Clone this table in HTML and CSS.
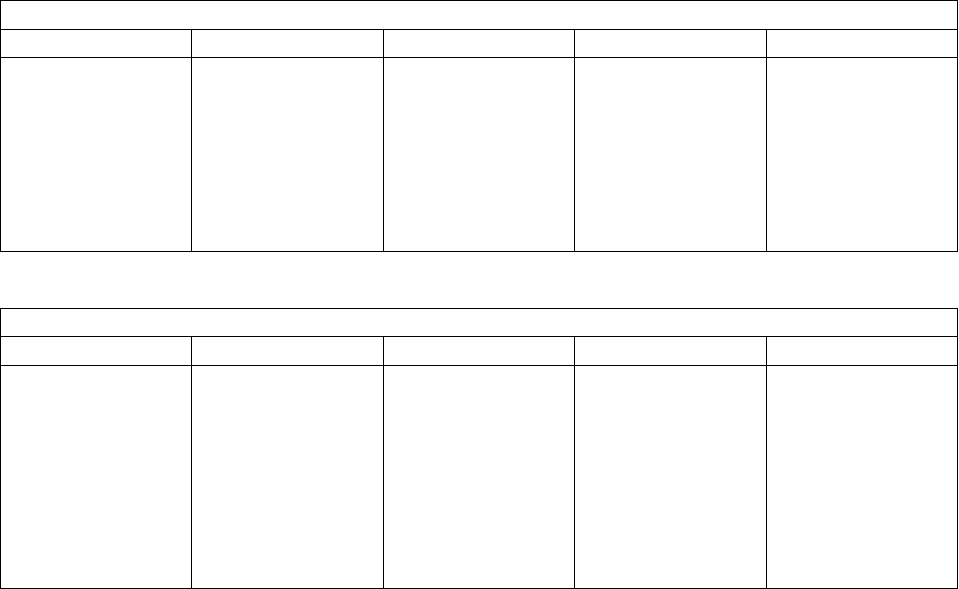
FILE: index.html
```html
<!DOCTYPE html>
<html>
<head>
<meta charset="utf-8">
<link rel="stylesheet" href="styles.css">
</head>
<body>
<div class="page">
  <div class="grid grid-a">
    <div class="cell title"></div>
    <div class="cell"></div><div class="cell"></div><div class="cell"></div><div class="cell"></div><div class="cell"></div>
    <div class="cell"></div><div class="cell"></div><div class="cell"></div><div class="cell"></div><div class="cell"></div>
  </div>
  <div class="grid grid-b">
    <div class="cell title"></div>
    <div class="cell"></div><div class="cell"></div><div class="cell"></div><div class="cell"></div><div class="cell"></div>
    <div class="cell"></div><div class="cell"></div><div class="cell"></div><div class="cell"></div><div class="cell"></div>
  </div>
</div>
</body>
</html>
```
FILE: styles.css
```css
html, body {
  margin: 0;
  padding: 0;
  background: #fff;
  font-family: "Liberation Sans", Arial, sans-serif;
}
.page {
  width: 959px;
  display: flex;
  flex-direction: column;
  gap: 56px;
}
.grid {
  width: 958px;
  box-sizing: border-box;
  border: 1px solid #000;
  background: #000;
  display: grid;
  grid-template-columns: repeat(5, 1fr);
  gap: 1px;
}
.grid-a {
  grid-template-rows: 28px 27px 193px;
}
.grid-b {
  grid-template-rows: 27px 28px 222px;
}
.cell {
  background: #fff;
}
.title {
  grid-column: 1 / -1;
}
```
